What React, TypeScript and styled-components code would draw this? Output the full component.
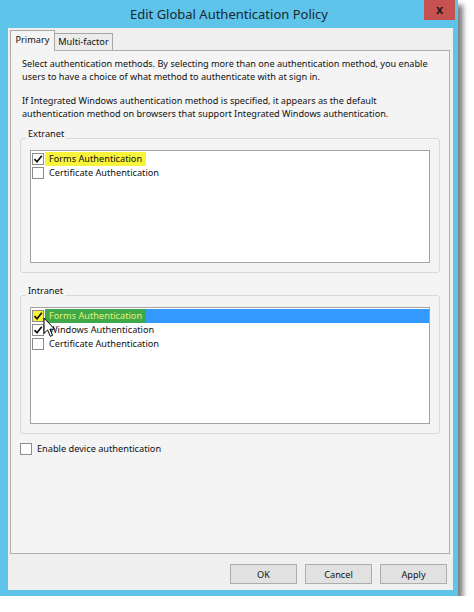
import React from "react";
import styled, { createGlobalStyle } from "styled-components";

const GlobalStyle = createGlobalStyle`
  html, body { margin: 0; padding: 0; background: #ffffff; }
  body { font-family: "Noto Sans", "Liberation Sans", sans-serif; color: #111; }
  * { box-sizing: border-box; }
`;

const Window = styled.div`
  width: 458px;
  height: 596px;
  background: #5fc4ea;
  box-shadow: 5px 5px 5px rgba(0, 0, 0, 0.5);
  display: flex;
  flex-direction: column;
`;

const TitleBar = styled.div`
  flex: none;
  height: 28px;
  display: grid;
  grid-template-columns: 1fr auto 1fr;
`;

const Title = styled.div`
  grid-column: 2;
  align-self: center;
  font-size: 13px;
  line-height: 28px;
  color: #1d2730;
  white-space: nowrap;
`;

const CloseButton = styled.div`
  grid-column: 3;
  justify-self: end;
  align-self: start;
  width: 31px;
  height: 20px;
  margin-right: 3px;
  background: #c75050;
  display: flex;
  align-items: center;
  justify-content: center;
  font: bold 13px "Liberation Sans", sans-serif;
  color: #1a1a1a;
  padding-bottom: 2px;
`;

const Client = styled.div`
  flex: 1;
  min-height: 0;
  margin: 0 5px 6px 8px;
  background: #efefef;
  display: flex;
  flex-direction: column;
  padding: 2px 3px 0 2px;
`;

const TabStrip = styled.div`
  flex: none;
  height: 21px;
  margin-bottom: -1px;
  display: flex;
  align-items: flex-start;
  position: relative;
  z-index: 1;
`;

const Tab = styled.div<{ $active?: boolean; $w: number }>`
  width: ${(p) => p.$w}px;
  height: ${(p) => (p.$active ? 21 : 17)}px;
  margin-top: ${(p) => (p.$active ? 0 : 3)}px;
  border: 1px solid #aca6a6;
  border-bottom: none;
  ${(p) => (p.$active ? "" : "border-left: none;")}
  background: ${(p) => (p.$active ? "#f4f4f4" : "#ececec")};
  font-size: 9.2px;
  display: flex;
  justify-content: center;
  padding-top: ${(p) => (p.$active ? 3 : 2)}px;
  line-height: 12px;
`;

const Panel = styled.div`
  flex: 1;
  border: 1px solid #b6acac;
  background: #f4f4f4;
  padding: 7px 9px 0;
  display: flex;
  flex-direction: column;
`;

const Para = styled.p<{ $gap?: boolean }>`
  margin: ${(p) => (p.$gap ? "12px" : "0")} 0 0;
  padding: 0 2px;
  font-size: 9.15px;
  line-height: 12.5px;
`;

const Group = styled.fieldset<{ $top: number }>`
  margin: ${(p) => p.$top}px 0 0;
  padding: 2px 9px 9px;
  border: 1px solid #d9d9d9;
  border-radius: 3px;
  min-width: 0;
`;

const Legend = styled.legend`
  font-size: 9.2px;
  line-height: 12px;
  padding: 0 2px 8px;
  margin-left: -4px;
`;

const ListBox = styled.div<{ $h: number }>`
  position: relative;
  height: ${(p) => p.$h}px;
  background: #ffffff;
  border: 1px solid #a3a3a3;
  padding: 1px 0 1px 1px;
  display: flex;
  flex-direction: column;
`;

const Row = styled.div`
  height: 14px;
  display: flex;
  align-items: center;
`;

const Box = styled.span<{ $hl?: boolean }>`
  flex: none;
  width: 12px;
  height: 12px;
  border: 1px solid #8c8c8c;
  background: ${(p) => (p.$hl ? "#f6f23a" : "#ffffff")};
  display: flex;
  align-items: center;
  justify-content: center;
`;

const ItemLabel = styled.span<{ $selected?: boolean }>`
  flex: ${(p) => (p.$selected ? 1 : "none")};
  align-self: stretch;
  margin-left: 1px;
  display: flex;
  background: ${(p) => (p.$selected ? "#3399ff" : "transparent")};
`;

const ItemText = styled.span<{ $mark?: "yellow" | "green" }>`
  padding: 0 4px;
  font-size: 9.2px;
  line-height: 14px;
  white-space: nowrap;
  background: ${(p) =>
    p.$mark === "yellow" ? "#f8f43c" : p.$mark === "green" ? "#3fa848" : "transparent"};
  color: ${(p) => (p.$mark === "green" ? "#e4f27a" : "#111")};
`;

const Cursor = styled.svg`
  position: absolute;
  left: 12px;
  top: 9px;
`;

const DeviceRow = styled.label`
  margin-top: 9px;
  display: flex;
  align-items: center;
  gap: 5px;
  font-size: 9.2px;
  line-height: 12px;
`;

const ButtonRow = styled.div`
  flex: none;
  display: flex;
  justify-content: flex-end;
  gap: 8px;
  padding: 10px 3px 6px 0;
`;

const Button = styled.div`
  width: 67px;
  height: 20px;
  background: #e1e1e1;
  border: 1px solid #adadad;
  display: flex;
  align-items: center;
  justify-content: center;
  font-size: 9.2px;
`;

const Check = () => (
  <svg width="10" height="10" viewBox="0 0 10 10">
    <path d="M1.5 5.2 L4 7.8 L8.8 1.8" fill="none" stroke="#111" strokeWidth="1.7" />
  </svg>
);

type ItemProps = { label: string; checked?: boolean; boxHl?: boolean; mark?: "yellow" | "green"; selected?: boolean };

const Item = ({ label, checked, boxHl, mark, selected }: ItemProps) => (
  <Row>
    <Box $hl={boxHl}>{checked && <Check />}</Box>
    <ItemLabel $selected={selected}>
      <ItemText $mark={mark}>{label}</ItemText>
    </ItemLabel>
  </Row>
);

export default function App() {
  return (
    <>
      <GlobalStyle />
      <Window>
        <TitleBar>
          <Title>Edit Global Authentication Policy</Title>
          <CloseButton>x</CloseButton>
        </TitleBar>
        <Client>
          <TabStrip>
            <Tab $active $w={45}>Primary</Tab>
            <Tab $w={58}>Multi-factor</Tab>
          </TabStrip>
          <Panel>
            <Para>
              Select authentication methods. By selecting more than one authentication method, you enable
              users to have a choice of what method to authenticate with at sign in.
            </Para>
            <Para $gap>
              If Integrated Windows authentication method is specified, it appears as the default
              authentication method on browsers that support Integrated Windows authentication.
            </Para>
            <Group $top={8}>
              <Legend>Extranet</Legend>
              <ListBox $h={113}>
                <Item label="Forms Authentication" checked mark="yellow" />
                <Item label="Certificate Authentication" />
              </ListBox>
            </Group>
            <Group $top={12}>
              <Legend>Intranet</Legend>
              <ListBox $h={117}>
                <Item label="Forms Authentication" checked boxHl mark="green" selected />
                <Item label="Windows Authentication" checked />
                <Item label="Certificate Authentication" />
                <Cursor width="13" height="21" viewBox="0 0 13 21">
                  <path
                    d="M1 1 L1 16.5 L4.6 13 L7.4 19.3 L9.6 18.3 L6.9 12.2 L11.6 12.2 Z"
                    fill="#ffffff"
                    stroke="#000000"
                    strokeWidth="1"
                    strokeLinejoin="round"
                  />
                </Cursor>
              </ListBox>
            </Group>
            <DeviceRow>
              <Box />
              Enable device authentication
            </DeviceRow>
          </Panel>
          <ButtonRow>
            <Button>OK</Button>
            <Button>Cancel</Button>
            <Button>Apply</Button>
          </ButtonRow>
        </Client>
      </Window>
    </>
  );
}
